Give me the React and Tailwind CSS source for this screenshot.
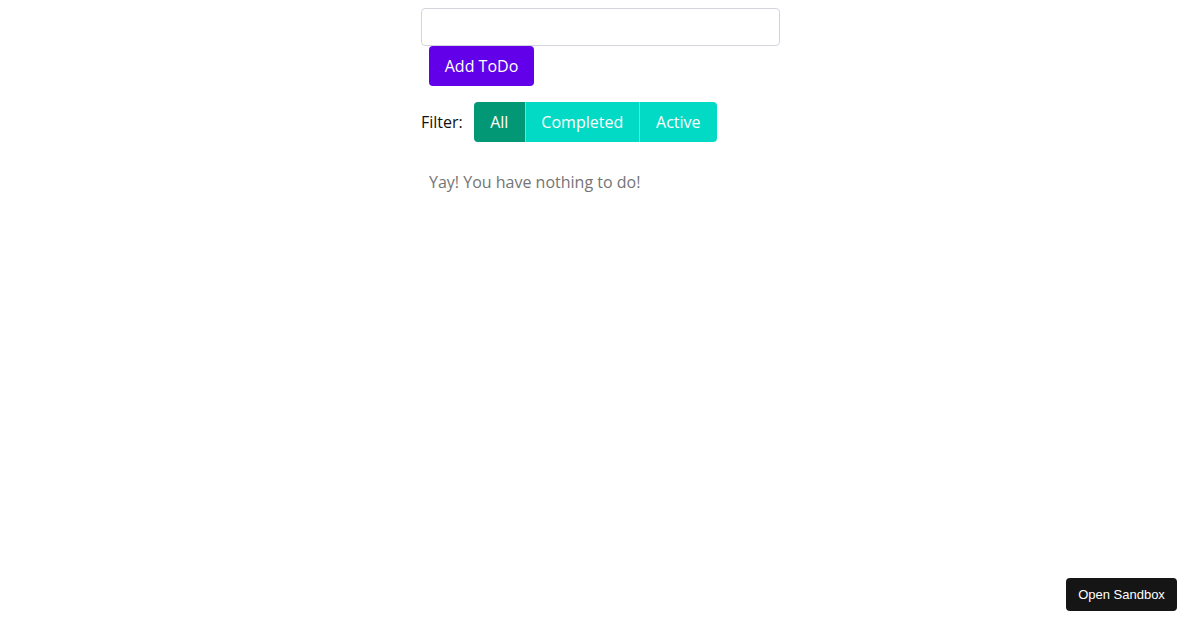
export default function App() {
  return (
    <div className="relative h-[630px] w-[1200px] bg-white" style={{ fontFamily: '"Open Sans", sans-serif' }}>
      <div className="mx-auto w-[358px] pt-2">
        <input
          type="text"
          className="block h-[38px] w-[359px] rounded-[4px] border border-[#d1d5db] bg-white px-2 text-base outline-none"
        />
        <button className="ml-2 h-10 w-[105px] rounded-[4px] bg-[#6200ea] text-base text-white">
          Add ToDo
        </button>
        <div className="mt-4 flex items-center">
          <span className="text-base text-[#111]">Filter:</span>
          <div className="ml-[11px] flex h-10 overflow-hidden rounded-[4px]">
            <button className="w-[51px] bg-[#039875] text-base text-white">All</button>
            <button className="w-[114px] border-l border-[#5ce6d8] bg-[#03dac5] text-base text-white">Completed</button>
            <button className="w-[78px] border-l border-[#5ce6d8] bg-[#03dac5] text-base text-white">Active</button>
          </div>
        </div>
        <p className="ml-2 mt-[28px] text-base leading-6 text-[#757575]">Yay! You have nothing to do!</p>
      </div>
      <div
        className="absolute left-[1066px] top-[578px] flex h-[33px] w-[111px] items-center justify-center rounded-[4px] bg-[#151515] text-[13px] text-white"
        style={{ fontFamily: '"Liberation Sans", Arial, sans-serif' }}
      >
        Open Sandbox
      </div>
    </div>
  );
}
